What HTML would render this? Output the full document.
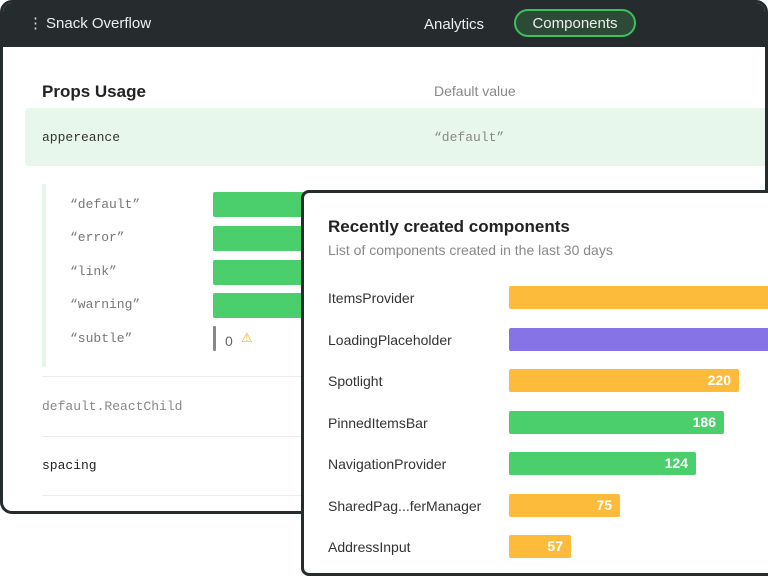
<!DOCTYPE html>
<html><head><style>
*{margin:0;padding:0;box-sizing:border-box}
body{width:768px;height:576px;background:#fff;position:relative;overflow:hidden;font-family:"Liberation Sans",sans-serif}
.win{position:absolute;left:0;top:0;width:768px;height:514px;border:3px solid #262c2e;border-radius:12px;background:#fff;overflow:hidden}
.hdr{position:absolute;left:0;top:0;right:0;height:44px;background:#262c2e}
.a{position:absolute;white-space:nowrap}
.mono{font-family:"Liberation Mono",monospace}
.g{position:absolute;background:#4bcf6c;border-radius:2px}
.card{position:absolute;left:301px;top:190px;width:480px;height:386px;border:3px solid #262c2e;border-radius:8px;background:#fff}
.lbl{position:absolute;left:24px;font-size:14px;color:#333}
.bar{position:absolute;left:205px;height:23px;border-radius:2px;color:#fff;font-weight:bold;font-size:14px;text-align:right;padding-right:8px;line-height:23px}
.o{background:#fdbb3c}
.line{position:absolute;left:42px;width:270px;height:1px;background:#ececec}
</style></head><body>
<div class="win">
 <div class="hdr">
  <div class="a" style="left:25px;top:11px;color:#ddd;font-size:15px">&#8942;</div>
  <div class="a" style="left:43px;top:12px;color:#eee;font-size:15px">Snack Overflow</div>
  <div class="a" style="left:421px;top:13px;color:#eee;font-size:15px">Analytics</div>
  <div class="a" style="left:511px;top:6px;width:122px;height:28px;border:2px solid #3cc060;border-radius:14px;background:#2c4a35;color:#eee;font-size:15px;text-align:center;line-height:26px">Components</div>
 </div>
 <div class="a" style="left:39px;top:79px;font-size:17px;font-weight:bold;color:#222">Props Usage</div>
 <div class="a" style="left:431px;top:80px;font-size:14px;color:#888">Default value</div>
 <div class="a" style="left:22px;top:105px;width:760px;height:58px;background:#e8f7ec;border-radius:4px"></div>
 <div class="a mono" style="left:39px;top:127px;font-size:13px;color:#333">appereance</div>
 <div class="a mono" style="left:431px;top:127px;font-size:13px;color:#888">“default”</div>
 <div class="a" style="left:39px;top:181px;width:4px;height:183px;background:#e5f7ea"></div>
 <div class="a mono" style="left:67px;top:194px;font-size:13px;color:#777">“default”</div>
 <div class="a mono" style="left:67px;top:227px;font-size:13px;color:#777">“error”</div>
 <div class="a mono" style="left:67px;top:261px;font-size:13px;color:#777">“link”</div>
 <div class="a mono" style="left:67px;top:294px;font-size:13px;color:#777">“warning”</div>
 <div class="a mono" style="left:67px;top:328px;font-size:13px;color:#777">“subtle”</div>
 <div class="g" style="left:210px;top:189px;width:100px;height:25px"></div>
 <div class="g" style="left:210px;top:223px;width:100px;height:25px"></div>
 <div class="g" style="left:210px;top:257px;width:100px;height:25px"></div>
 <div class="g" style="left:210px;top:290px;width:100px;height:25px"></div>
 <div class="a" style="left:210px;top:323px;width:3px;height:25px;background:#888;border-radius:1px"></div>
 <div class="a" style="left:222px;top:330px;font-size:14px;color:#666">0</div>
 <div class="a" style="left:238px;top:327px;font-size:13px;color:#f5b01c">&#9888;</div>
 <div class="line" style="left:39px;top:373px"></div>
 <div class="a mono" style="left:39px;top:396px;font-size:13px;color:#888">default.ReactChild</div>
 <div class="line" style="left:39px;top:433px"></div>
 <div class="a mono" style="left:39px;top:455px;font-size:13px;color:#222">spacing</div>
 <div class="line" style="left:39px;top:492px"></div>
</div>
<div class="card">
 <div class="a" style="left:24px;top:24px;font-size:17px;font-weight:bold;color:#222">Recently created components</div>
 <div class="a" style="left:24px;top:49px;font-size:14px;color:#888">List of components created in the last 30 days</div>
 <div class="lbl" style="top:97px">ItemsProvider</div>
 <div class="lbl" style="top:139px">LoadingPlaceholder</div>
 <div class="lbl" style="top:180px">Spotlight</div>
 <div class="lbl" style="top:222px">PinnedItemsBar</div>
 <div class="lbl" style="top:263px">NavigationProvider</div>
 <div class="lbl" style="top:305px">SharedPag...ferManager</div>
 <div class="lbl" style="top:346px">AddressInput</div>
 <div class="bar o" style="top:93px;width:300px"></div>
 <div class="bar" style="top:135px;width:300px;background:#8673e6"></div>
 <div class="bar o" style="top:176px;width:230px">220</div>
 <div class="bar" style="top:218px;width:215px;background:#4bcf6c">186</div>
 <div class="bar" style="top:259px;width:187px;background:#4bcf6c">124</div>
 <div class="bar o" style="top:301px;width:111px">75</div>
 <div class="bar o" style="top:342px;width:62px">57</div>
</div>
</body></html>
